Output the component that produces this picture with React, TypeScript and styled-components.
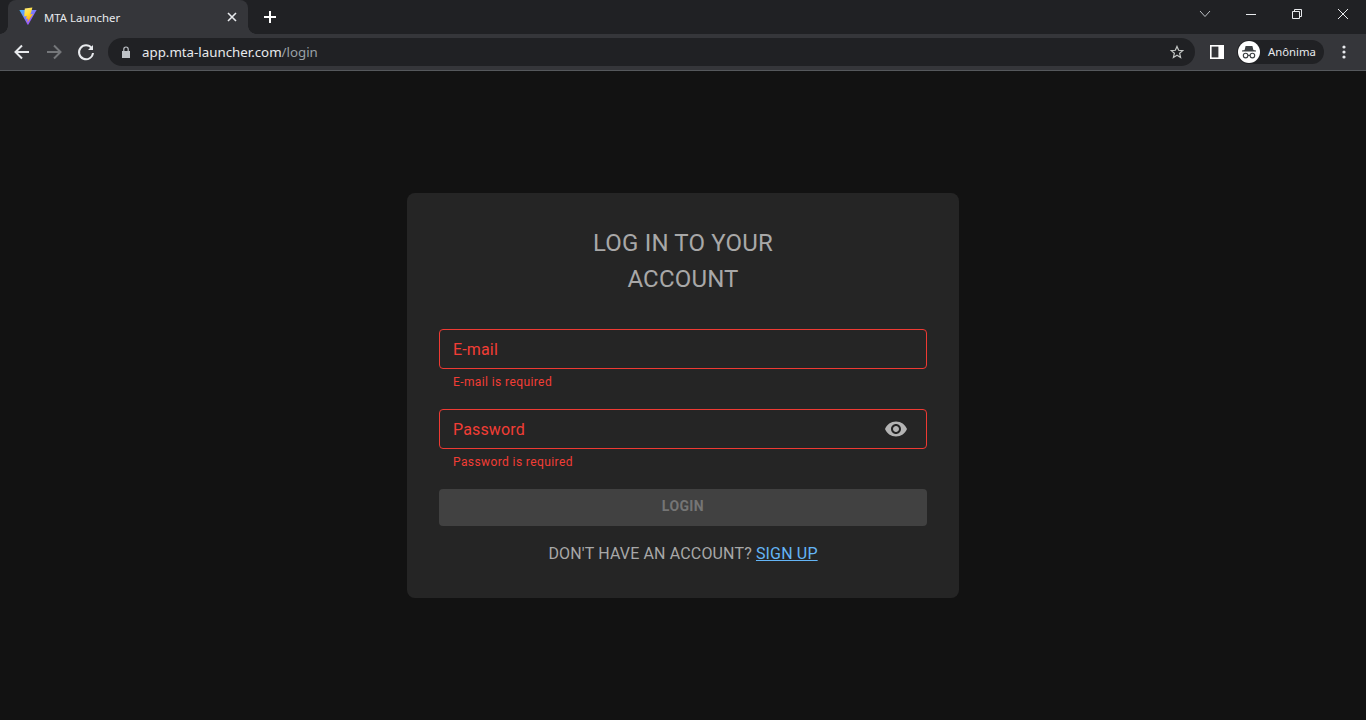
import React from 'react'
import styled, { createGlobalStyle } from 'styled-components'

const GlobalStyle = createGlobalStyle`
  html, body {
    margin: 0;
    padding: 0;
    height: 100%;
    background: #121212;
  }
  #root {
    height: 100%;
  }
  * {
    box-sizing: border-box;
  }
`

const Page = styled.div`
  height: 720px;
  display: flex;
  flex-direction: column;
  overflow: hidden;
`

const TabStrip = styled.div`
  height: 34px;
  flex: none;
  display: flex;
  align-items: stretch;
  padding-left: 8px;
  background: #202124;
`

const Tab = styled.div`
  position: relative;
  width: 240px;
  display: flex;
  align-items: center;
  padding: 0 8px 0 11px;
  background: #35363a;
  border-radius: 8px 8px 0 0;

  &::before,
  &::after {
    content: '';
    position: absolute;
    bottom: 0;
    width: 8px;
    height: 8px;
  }
  &::before {
    left: -8px;
    background: radial-gradient(circle at 0 0, transparent 7.5px, #35363a 8px);
  }
  &::after {
    right: -8px;
    background: radial-gradient(circle at 100% 0, transparent 7.5px, #35363a 8px);
  }
`

const LogoIcon = styled.svg`
  width: 18px;
  height: 18px;
  flex: none;
  margin-bottom: 2px;
`

const TabTitle = styled.span`
  flex: 1;
  margin-left: 7px;
  font: 11.4px "Noto Sans", "Open Sans", sans-serif;
  color: #e8eaed;
  white-space: nowrap;
`

const TabClose = styled.svg`
  width: 16px;
  height: 16px;
  flex: none;
`

const NewTab = styled.svg`
  width: 16px;
  height: 16px;
  margin: 9px 0 0 14px;
`

const StripSpacer = styled.div`
  flex: 1;
`

const WindowButton = styled.div`
  width: 46px;
  display: flex;
  align-items: center;
  justify-content: center;
  padding-bottom: 6px;
`

const Toolbar = styled.div`
  height: 37px;
  flex: none;
  display: flex;
  align-items: center;
  padding: 0 0 1px 12px;
  background: #35363a;
  border-bottom: 1px solid #55585c;
`

const NavIcon = styled.svg`
  width: 20px;
  height: 20px;
  flex: none;
  margin-right: 12px;
`

const Omnibox = styled.div`
  flex: 1;
  height: 28px;
  display: flex;
  align-items: center;
  padding: 0 11px 0 12px;
  border-radius: 14px;
  background: #202124;
`

const LockIcon = styled.svg`
  width: 12px;
  height: 12px;
  flex: none;
  margin-right: 10px;
`

const Url = styled.div`
  flex: 1;
  font: 13.3px "Noto Sans", "Open Sans", sans-serif;
  color: #e8eaed;
  white-space: nowrap;
`

const UrlPath = styled.span`
  color: #9aa0a6;
`

const StarIcon = styled.svg`
  width: 14px;
  height: 14px;
  flex: none;
`

const ToolbarIcons = styled.div`
  display: flex;
  align-items: center;
  flex: none;
`

const PanelIcon = styled.svg`
  width: 14px;
  height: 14px;
  margin-left: 15px;
`

const ProfileChip = styled.div`
  display: flex;
  align-items: center;
  height: 24px;
  width: 87px;
  margin-left: 13px;
  padding-left: 1px;
  border-radius: 12px;
  background: #202124;
`

const AvatarIcon = styled.svg`
  width: 22px;
  height: 22px;
  flex: none;
`

const ProfileName = styled.span`
  margin-left: 8px;
  font: 11.3px "Noto Sans", "Open Sans", sans-serif;
  color: #e8eaed;
`

const MenuIcon = styled.svg`
  width: 16px;
  height: 16px;
  margin: 0 14px 0 12px;
`

const Main = styled.main`
  flex: 1;
  display: flex;
  align-items: center;
  justify-content: center;
  background: #121212;
`

const Card = styled.form`
  width: 552px;
  height: 405px;
  padding: 32px;
  border-radius: 8px;
  background: #252525;
  font-family: Roboto, sans-serif;
`

const Title = styled.h1`
  margin: 0 auto 32px;
  width: 240px;
  font-size: 24px;
  font-weight: 400;
  line-height: 36px;
  letter-spacing: 0.18px;
  text-align: center;
  color: #a8a8a8;
`

const Field = styled.div`
  height: 80px;
`

const InputBox = styled.div`
  height: 40px;
  display: flex;
  align-items: center;
  padding: 0 18px 0 13px;
  border: 1px solid #ee3a33;
  border-radius: 4px;
`

const Input = styled.input`
  flex: 1;
  min-width: 0;
  padding: 0;
  border: 0;
  outline: 0;
  background: transparent;
  font: 400 16px Roboto, sans-serif;
  letter-spacing: 0.15px;
  color: #f23d35;

  &::placeholder {
    color: #f23d35;
    opacity: 1;
  }
`

const Helper = styled.p`
  margin: 3px 0 0 14px;
  font-size: 12px;
  line-height: 20px;
  letter-spacing: 0.4px;
  color: #f23d35;
`

const EyeIcon = styled.svg`
  width: 24px;
  height: 24px;
  flex: none;
  fill: #b4b4b4;
`

const LoginButton = styled.button`
  display: block;
  width: 100%;
  height: 37px;
  padding: 0 0 3px;
  border: 0;
  border-radius: 4px;
  background: #414141;
  font: 700 14px Roboto, sans-serif;
  letter-spacing: 0.4px;
  color: #757575;
`

const Footer = styled.p`
  margin: 16px 0 0;
  font-size: 16px;
  line-height: 24px;
  letter-spacing: 0.15px;
  text-align: center;
  color: #a8a8a8;
`

const SignUp = styled.a`
  color: #64b5f6;
  text-decoration: underline;
`

const ViteLogo = () => (
  <LogoIcon viewBox="0 0 18 18">
    <defs>
      <linearGradient id="viteBody" x1="0" y1="0" x2="1" y2="1">
        <stop offset="0" stopColor="#41b8ff" />
        <stop offset="1" stopColor="#bd34fe" />
      </linearGradient>
      <linearGradient id="viteBolt" x1="0" y1="0" x2="0.4" y2="1">
        <stop offset="0" stopColor="#ffea83" />
        <stop offset="0.5" stopColor="#ffdd35" />
        <stop offset="1" stopColor="#ffa800" />
      </linearGradient>
    </defs>
    <path d="M0.4 3 L17.6 3 L9.4 17.4 Q9 18 8.5 17.4 Z" fill="url(#viteBody)" />
    <path d="M13.4 0.6 L5.8 1.6 L5.2 9.4 L7.8 9 L7 12 L9 11.6 L8.4 15.6 L14 7 L11.2 7.4 L12.2 5 Z" fill="url(#viteBolt)" />
  </LogoIcon>
)

const IncognitoAvatar = () => (
  <AvatarIcon viewBox="0 0 22 22">
    <circle cx="11" cy="11" r="11" fill="#fff" />
    <path d="M7.6 5 L14.4 5 L15.4 9 L18 9.6 L18 10.6 L4 10.6 L4 9.6 L6.6 9 Z" fill="#3c4043" />
    <circle cx="7.6" cy="14.6" r="2.3" fill="none" stroke="#3c4043" strokeWidth="1.1" />
    <circle cx="14.4" cy="14.6" r="2.3" fill="none" stroke="#3c4043" strokeWidth="1.1" />
    <path d="M9.9 14.4 H12.1" stroke="#3c4043" strokeWidth="1.1" />
  </AvatarIcon>
)

const App = () => {
  return (
    <Page>
      <GlobalStyle />
      <TabStrip>
        <Tab>
          <ViteLogo />
          <TabTitle>MTA Launcher</TabTitle>
          <TabClose viewBox="0 0 16 16">
            <path d="M4 4 L12 12 M12 4 L4 12" stroke="#e8eaed" strokeWidth="1.6" />
          </TabClose>
        </Tab>
        <NewTab viewBox="0 0 16 16">
          <path d="M8 2 V14 M2 8 H14" stroke="#fff" strokeWidth="2" />
        </NewTab>
        <StripSpacer />
        <WindowButton>
          <svg width="12" height="8" viewBox="0 0 12 8">
            <path d="M1 1 L6 6.5 L11 1" fill="none" stroke="#bdc1c6" strokeWidth="1" />
          </svg>
        </WindowButton>
        <WindowButton>
          <svg width="10" height="10" viewBox="0 0 10 10">
            <path d="M0 5.5 H10" stroke="#e8eaed" strokeWidth="1" />
          </svg>
        </WindowButton>
        <WindowButton>
          <svg width="10" height="10" viewBox="0 0 10 10">
            <path d="M0.5 2.5 H7.5 V9.5 H0.5 Z M2.5 2.5 V0.5 H9.5 V7.5 H7.5" fill="none" stroke="#e8eaed" strokeWidth="1" />
          </svg>
        </WindowButton>
        <WindowButton>
          <svg width="12" height="12" viewBox="0 0 12 12">
            <path d="M1 1 L11 11 M11 1 L1 11" stroke="#e8eaed" strokeWidth="1" />
          </svg>
        </WindowButton>
      </TabStrip>

      <Toolbar>
        <NavIcon viewBox="0 0 20 20">
          <path d="M17 10 H4 M10 3.5 L3.5 10 L10 16.5" fill="none" stroke="#e8eaed" strokeWidth="2" />
        </NavIcon>
        <NavIcon viewBox="0 0 20 20">
          <path d="M3 10 H16 M10 3.5 L16.5 10 L10 16.5" fill="none" stroke="#75777a" strokeWidth="2" />
        </NavIcon>
        <NavIcon viewBox="0 0 20 20">
          <path d="M15.6 6 A7 7 0 1 0 17 11" fill="none" stroke="#e8eaed" strokeWidth="2" />
          <path d="M17 3 V8 H12 Z" fill="#e8eaed" />
        </NavIcon>
        <Omnibox>
          <LockIcon viewBox="0 0 12 12">
            <path d="M2 5 H10 V12 H2 Z" fill="#bdc1c6" />
            <path d="M3.8 5 V3.2 A2.2 2.2 0 0 1 8.2 3.2 V5" fill="none" stroke="#bdc1c6" strokeWidth="1.2" />
          </LockIcon>
          <Url>
            app.mta-launcher.com<UrlPath>/login</UrlPath>
          </Url>
          <StarIcon viewBox="0 0 16 16">
            <path d="M8 1.6 L9.9 6 L14.6 6.4 L11 9.5 L12.1 14.2 L8 11.7 L3.9 14.2 L5 9.5 L1.4 6.4 L6.1 6 Z" fill="none" stroke="#c4c7c5" strokeWidth="1.4" />
          </StarIcon>
        </Omnibox>
        <ToolbarIcons>
          <PanelIcon viewBox="0 0 14 14">
            <path d="M0 0 H14 V14 H0 Z" fill="#fff" />
            <path d="M1.6 1.6 H8.4 V12.4 H1.6 Z" fill="#35363a" />
          </PanelIcon>
          <ProfileChip>
            <IncognitoAvatar />
            <ProfileName>Anônima</ProfileName>
          </ProfileChip>
          <MenuIcon viewBox="0 0 16 16">
            <circle cx="8" cy="3" r="1.6" fill="#e8eaed" />
            <circle cx="8" cy="8" r="1.6" fill="#e8eaed" />
            <circle cx="8" cy="13" r="1.6" fill="#e8eaed" />
          </MenuIcon>
        </ToolbarIcons>
      </Toolbar>

      <Main>
        <Card>
          <Title>LOG IN TO YOUR ACCOUNT</Title>
          <Field>
            <InputBox>
              <Input placeholder="E-mail" />
            </InputBox>
            <Helper>E-mail is required</Helper>
          </Field>
          <Field>
            <InputBox>
              <Input placeholder="Password" type="password" />
              <EyeIcon viewBox="0 0 24 24">
                <path d="M12 4.5C7 4.5 2.73 7.61 1 12c1.73 4.39 6 7.5 11 7.5s9.27-3.11 11-7.5c-1.73-4.39-6-7.5-11-7.5zM12 17c-2.76 0-5-2.24-5-5s2.24-5 5-5 5 2.24 5 5-2.24 5-5 5zm0-8c-1.66 0-3 1.34-3 3s1.34 3 3 3 3-1.34 3-3-1.34-3-3-3z" />
              </EyeIcon>
            </InputBox>
            <Helper>Password is required</Helper>
          </Field>
          <LoginButton type="button" disabled>LOGIN</LoginButton>
          <Footer>
            DON'T HAVE AN ACCOUNT? <SignUp href="#">SIGN UP</SignUp>
          </Footer>
        </Card>
      </Main>
    </Page>
  )
}

export default App
